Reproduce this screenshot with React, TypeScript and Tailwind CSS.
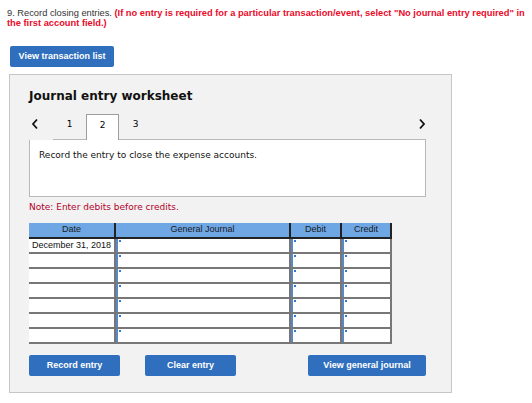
import React from "react";

const arial = { fontFamily: '"Liberation Sans", Arial, sans-serif' } as const;
const verdana = { fontFamily: '"DejaVu Sans", Verdana, sans-serif' } as const;

function InputCell({ w }: { w: string }) {
  return (
    <td className={`${w} h-[15px] p-0 border-b-2 border-r-2 border-[#777777] bg-white`}>
      <div className="relative h-[13px] border-l-2 border-[#5b88c4] bg-white">
        <div className="absolute left-[1px] top-[1px] w-[2px] h-[2px] bg-[#2f7ad8]" />
      </div>
    </td>
  );
}

function Btn({ children, w }: { children: React.ReactNode; w: string }) {
  return (
    <button
      className={`${w} h-[21px] rounded-[2px] bg-[#2f6fbd] text-white text-[9px] font-bold flex items-center justify-center`}
      style={arial}
    >
      {children}
    </button>
  );
}

export default function App() {
  const rows = ["December 31, 2018", "", "", "", "", "", ""];
  return (
    <div className="w-[532px] h-[403px] bg-white overflow-hidden relative">
      <div className="pl-[7px] pt-[8px] pr-[2px] text-[9.3px] leading-[10px]" style={arial}>
        <span className="text-[#333333]">9. Record closing entries. </span>
        <span className="text-[#ea0a2a] font-bold">
          (If no entry is required for a particular transaction/event, select "No journal entry required" in the first account field.)
        </span>
      </div>
      <div className="pl-[10px] mt-[18px]">
        <Btn w="w-[104px]">View transaction list</Btn>
      </div>
      <div className="ml-[9px] mt-[7px] w-[443px] h-[319px] border border-[#c6c6c6] bg-[#f2f2f2] pl-[19px]">
        <div className="pt-[13px] text-[12px] font-bold text-[#111] leading-[16px]" style={verdana}>
          Journal entry worksheet
        </div>
        <div className="mt-[10px] w-[397px] flex items-end relative h-[26px]">
          <div className="w-[24px] h-full flex items-center pl-[2px] pb-[6px]">
            <svg width="8" height="12" viewBox="0 0 8 12">
              <path d="M6 1.5 L2 6 L6 10.5" stroke="#111" strokeWidth="1.8" fill="none" />
            </svg>
          </div>
          <div className="w-[33px] h-full flex items-center justify-center text-[9px] pb-[4px] border-b border-[#b8b8b8]" style={verdana}>1</div>
          <div className="w-[33px] h-full flex items-center justify-center text-[9px] pb-[4px] border border-b-0 border-[#9d9d9d] bg-white" style={verdana}>2</div>
          <div className="w-[33px] h-full flex items-center justify-center text-[9px] pb-[4px] border-b border-[#b8b8b8]" style={verdana}>3</div>
          <div className="flex-1 h-full border-b border-[#b8b8b8] flex items-center justify-end pb-[6px]">
            <svg width="8" height="12" viewBox="0 0 8 12">
              <path d="M2 1.5 L6 6 L2 10.5" stroke="#111" strokeWidth="1.8" fill="none" />
            </svg>
          </div>
        </div>
        <div className="w-[397px] h-[57px] border border-t-0 border-[#b8b8b8] bg-white pl-[9px] pt-[9px] text-[9px] text-[#111]" style={verdana}>
          Record the entry to close the expense accounts.
        </div>
        <div className="mt-[4px] text-[9px] text-[#b3002a] leading-[12px]" style={verdana}>
          Note: Enter debits before credits.
        </div>
        <table className="mt-[10px] border-collapse text-[9px]" style={arial}>
          <thead>
            <tr className="bg-[#6fa7e5]">
              <th className="w-[86px] h-[15px] p-0 font-normal text-[#1a1a1a] border-r-2 border-b-2 border-[#222]">Date</th>
              <th className="w-[175px] h-[15px] p-0 font-normal text-[#1a1a1a] border-r-2 border-b-2 border-[#222]">General Journal</th>
              <th className="w-[51px] h-[15px] p-0 font-normal text-[#1a1a1a] border-r-2 border-b-2 border-[#222]">Debit</th>
              <th className="w-[50px] h-[15px] p-0 font-normal text-[#1a1a1a] border-r-2 border-b-2 border-[#222]">Credit</th>
            </tr>
          </thead>
          <tbody>
            {rows.map((d, i) => (
              <tr key={i}>
                <td className="w-[86px] h-[15px] p-0 pl-[3px] bg-white border-b-2 border-r-2 border-[#777777] text-[#111] leading-[13px] whitespace-nowrap">
                  {d}
                </td>
                <InputCell w="w-[175px]" />
                <InputCell w="w-[51px]" />
                <InputCell w="w-[50px]" />
              </tr>
            ))}
          </tbody>
        </table>
        <div className="mt-[11px] w-[397px] flex items-center">
          <Btn w="w-[91px]">Record entry</Btn>
          <div className="w-[25px]" />
          <Btn w="w-[91px]">Clear entry</Btn>
          <div className="w-[72px]" />
          <Btn w="w-[118px]">View general journal</Btn>
        </div>
      </div>
    </div>
  );
}
